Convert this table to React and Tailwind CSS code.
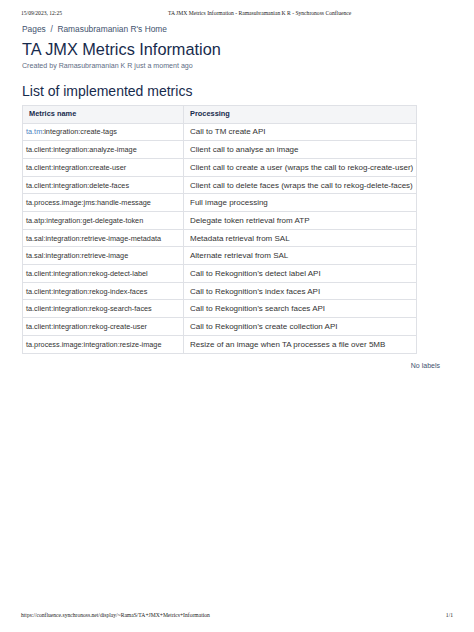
import React from "react";

const rows = [
  { prefix: "ta.tm", name: ":integration:create-tags", desc: "Call to TM create API" },
  { name: "ta.client:integration:analyze-image", desc: "Client call to analyse an image" },
  { name: "ta.client:integration:create-user", desc: "Client call to create a user (wraps the call to rekog-create-user)" },
  { name: "ta.client:integration:delete-faces", desc: "Client call to delete faces (wraps the call to rekog-delete-faces)" },
  { name: "ta.process.image:jms:handle-message", desc: "Full image processing" },
  { name: "ta.atp:integration:get-delegate-token", desc: "Delegate token retrieval from ATP" },
  { name: "ta.sal:integration:retrieve-image-metadata", desc: "Metadata retrieval from SAL" },
  { name: "ta.sal:integration:retrieve-image", desc: "Alternate retrieval from SAL" },
  { name: "ta.client:integration:rekog-detect-label", desc: "Call to Rekognition\u2019s detect label API" },
  { name: "ta.client:integration:rekog-index-faces", desc: "Call to Rekognition\u2019s index faces API" },
  { name: "ta.client:integration:rekog-search-faces", desc: "Call to Rekognition\u2019s search faces API" },
  { name: "ta.client:integration:rekog-create-user", desc: "Call to Rekognition\u2019s create collection API" },
  { name: "ta.process.image:integration:resize-image", desc: "Resize of an image when TA processes a file over 5MB" },
];

const App = () => {
  return (
    <div className="w-[474px] h-[632px] bg-white flex flex-col overflow-hidden font-['Liberation_Sans',Arial,sans-serif]">
      {/* Print header */}
      <div className="flex items-center pl-[21px] pr-[21px] pt-[11px] font-['Liberation_Serif',serif] text-[5.6px] text-[#222] leading-none">
        <span className="w-[147px]">15/09/2023, 12:25</span>
        <span>TA JMX Metrics Information - Ramasubramanian K R - Synchronoss Confluence</span>
      </div>

      {/* Page content */}
      <div className="pl-[22px] pt-[6px]">
        <div className="text-[8.4px] text-[#42526e] leading-[12px]">
          Pages&nbsp; /&nbsp; Ramasubramanian R's Home
        </div>
        <h1 className="mt-[4px] text-[16.3px] text-[#172b4d] leading-[20px]">TA JMX Metrics Information</h1>
        <div className="mt-[3px] text-[7.1px] text-[#5e6c84] leading-[9px]">
          Created by Ramasubramanian K R just a moment ago
        </div>
        <h2 className="mt-[11px] text-[14px] text-[#172b4d] leading-[18px]">List of implemented metrics</h2>

        <table className="mt-[5px] w-[395px] border-collapse table-fixed text-[#333]">
          <colgroup>
            <col className="w-[161px]" />
            <col />
          </colgroup>
          <thead>
            <tr className="h-[18px] bg-[#f4f5f7] text-[7.4px] text-[#172b4d]">
              <th className="border border-[#dfe1e6] text-left font-bold pl-[6px] leading-[16px]">Metrics name</th>
              <th className="border border-[#dfe1e6] text-left font-bold pl-[6px] leading-[16px]">Processing</th>
            </tr>
          </thead>
          <tbody>
            {rows.map((r) => (
              <tr key={r.name} className="h-[17.7px]">
                <td className="border border-[#dfe1e6] pl-[3px] leading-[15px] whitespace-nowrap text-[7.3px]">
                  {r.prefix && <span className="text-[#4a7fbf]">{r.prefix}</span>}
                  {r.name}
                </td>
                <td className="border border-[#dfe1e6] pl-[6px] leading-[15px] whitespace-nowrap text-[8px]">{r.desc}</td>
              </tr>
            ))}
          </tbody>
        </table>

        <div className="w-[418px] flex justify-end mt-[7px]">
          <span className="text-[7px] text-[#42526e]">No labels</span>
        </div>
      </div>

      <div className="flex-1" />

      {/* Print footer */}
      <div className="flex justify-between items-center pl-[21px] pr-[21px] pb-[13px] font-['Liberation_Serif',serif] text-[5.6px] text-[#222] leading-none">
        <span>https://confluence.synchronoss.net/display/~RamaS/TA+JMX+Metrics+Information</span>
        <span>1/1</span>
      </div>
    </div>
  );
};

export default App;
